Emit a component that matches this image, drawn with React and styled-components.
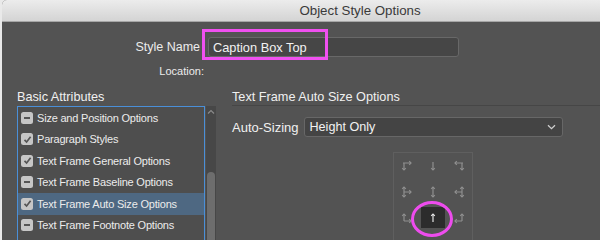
import styled, { createGlobalStyle } from "styled-components"

const GlobalStyle = createGlobalStyle`
  html, body {
    margin: 0;
    padding: 0;
    width: 600px;
    height: 240px;
    overflow: hidden;
    background: #e9e9e9;
  }
  body {
    font-family: "Liberation Sans", Arial, sans-serif;
  }
`

const Window = styled.div`
  margin-left: 2px;
  width: 598px;
  height: 240px;
  background: #535353;
  border-top-left-radius: 5px;
  overflow: hidden;
  display: flex;
  flex-direction: column;
`

const TitleBar = styled.div`
  height: 21px;
  flex: none;
  display: flex;
  align-items: center;
  justify-content: center;
  padding-left: 118px;
  background: linear-gradient(#ececec, #d4d4d4);
  border-bottom: 1px solid #a6a6a6;
  font-size: 13.3px;
  color: #3a3a3a;
`

const Form = styled.div`
  display: grid;
  grid-template-columns: 183px 251px;
  column-gap: 8px;
  align-items: center;
  padding: 15px 0 0 15px;
`

const Label = styled.div`
  text-align: right;
  color: #ececec;
  font-size: ${(p) => p.$size || 12.5}px;
  margin-right: ${(p) => p.$shift || 0}px;
  margin-top: ${(p) => p.$top || 0}px;
  line-height: 14px;
`

const InputWrap = styled.div`
  position: relative;
`

const TextInput = styled.div`
  height: 18px;
  background: #464646;
  border: 1px solid #686868;
  border-radius: 3px;
  display: flex;
  align-items: center;
  padding-left: 4px;
  font-size: 12.8px;
  color: #f2f2f2;
`

const Highlight = styled.div`
  position: absolute;
  left: -6px;
  top: -8px;
  width: 120px;
  height: 25px;
  border: 3px solid #f050f0;
`

const Main = styled.div`
  display: flex;
  padding: 11px 0 0 15px;
  flex: 1;
  min-height: 0;
`

const LeftCol = styled.div`
  width: 199px;
  flex: none;
  display: flex;
  flex-direction: column;
`

const RightCol = styled.div`
  flex: 1;
  margin-left: 16px;
  display: flex;
  flex-direction: column;
`

const Heading = styled.div`
  height: 16px;
  line-height: 16px;
  font-size: 12.7px;
  color: #f0f0f0;
  border-bottom: 1px solid ${(p) => (p.$rule ? "#464646" : "transparent")};
`

const ListArea = styled.div`
  display: flex;
  flex: 1;
  min-height: 0;
`

const List = styled.div`
  width: 187px;
  border: 1px solid #4a8fd8;
  border-bottom: none;
  background: #4e4e4e;
`

const Row = styled.div`
  height: 21.5px;
  display: flex;
  align-items: center;
  gap: 4px;
  padding-left: 3px;
  background: ${(p) => (p.$selected ? "#4e6882" : "transparent")};
  font-size: 11px;
  letter-spacing: -0.2px;
  color: #ececec;
`

const Check = styled.span`
  width: 12px;
  height: 12px;
  border-radius: 2.5px;
  background: #c6c6c6;
  display: flex;
  align-items: center;
  justify-content: center;
  flex: none;
`

const Scroll = styled.div`
  width: 10px;
  margin-left: 1px;
  background: #474747;
  position: relative;
  display: flex;
  flex-direction: column;
  align-items: center;
`

const ScrollThumb = styled.div`
  margin-top: 57px;
  width: 8px;
  flex: 1;
  background: #6d6d6d;
  border-radius: 4px 4px 0 0;
`

const SizingRow = styled.div`
  display: flex;
  align-items: center;
  gap: 6px;
  margin-top: 11px;
  font-size: 13px;
  color: #f0f0f0;
`

const Select = styled.div`
  width: 247px;
  height: 18px;
  display: flex;
  align-items: center;
  justify-content: space-between;
  padding: 0 6px 0 4px;
  background: #444444;
  border: 1px solid #676767;
  border-radius: 3px;
  font-size: 12.6px;
  color: #f2f2f2;
`

const RefWrap = styled.div`
  margin: 15px 0 0 161px;
  display: flex;
`

const RefBox = styled.div`
  width: 78px;
  height: 90px;
  border: 1px solid #5f5f5f;
  display: grid;
  grid-template-columns: repeat(3, 26px);
  grid-template-rows: repeat(3, 26px);
  align-content: start;
`

const Cell = styled.div`
  position: relative;
  display: flex;
  align-items: center;
  justify-content: center;
  &::before {
    content: "";
    position: absolute;
    left: 1px;
    top: 2px;
    width: 24px;
    height: 21px;
    background: ${(p) => (p.$selected ? "#2c2c2c" : "transparent")};
  }
  svg {
    position: relative;
  }
`

const Ring = styled.div`
  position: absolute;
  left: -9px;
  top: -4px;
  width: 36px;
  height: 30px;
  border: 3px solid #ee4cee;
  border-radius: 50%;
`

const rows = [
  { label: "Size and Position Options", mark: "minus" },
  { label: "Paragraph Styles", mark: "check" },
  { label: "Text Frame General Options", mark: "check" },
  { label: "Text Frame Baseline Options", mark: "minus" },
  { label: "Text Frame Auto Size Options", mark: "check", selected: true },
  { label: "Text Frame Footnote Options", mark: "minus" },
]

// arrows for each reference point cell: [x1, y1, x2, y2]
const arrows = [
  [[2, 3, 10, 3], [3, 3, 3, 10]],
  [[6, 2, 6, 10]],
  [[10, 3, 2, 3], [9, 3, 9, 10]],
  [[3, 6, 3, 1], [3, 6, 3, 11], [3, 6, 10, 6]],
  [[6, 6, 6, 1], [6, 6, 6, 11]],
  [[9, 6, 9, 1], [9, 6, 9, 11], [9, 6, 2, 6]],
  [[3, 9, 3, 2], [3, 9, 10, 9]],
  [[6, 10, 6, 2]],
  [[9, 9, 9, 2], [9, 9, 2, 9]],
]

const Arrows = ({ list, color }) => (
  <svg width="12" height="12" viewBox="0 0 12 12" fill="none" stroke={color} strokeWidth="1.2">
    {list.map(([x1, y1, x2, y2], i) => {
      const dx = Math.sign(x2 - x1)
      const dy = Math.sign(y2 - y1)
      const h = 1.8
      const head = dx
        ? `${x2 - dx * h},${y2 - h} ${x2},${y2} ${x2 - dx * h},${y2 + h}`
        : `${x2 - h},${y2 - dy * h} ${x2},${y2} ${x2 + h},${y2 - dy * h}`
      return (
        <g key={i}>
          <line x1={x1} y1={y1} x2={x2} y2={y2} />
          <polyline points={head} />
        </g>
      )
    })}
  </svg>
)

const Mark = ({ type }) => (
  <Check>
    {type === "check" ? (
      <svg width="9" height="9" viewBox="0 0 9 9" fill="none" stroke="#555" strokeWidth="1.7">
        <polyline points="1.5,4.8 3.6,7 7.6,1.8" />
      </svg>
    ) : (
      <svg width="8" height="8" viewBox="0 0 8 8">
        <rect x="1" y="3" width="6" height="2" fill="#555" />
      </svg>
    )}
  </Check>
)

const App = () => {
  return (
    <>
      <GlobalStyle />
      <Window>
        <TitleBar>Object Style Options</TitleBar>
        <Form>
          <Label>Style Name</Label>
          <InputWrap>
            <TextInput>Caption Box Top</TextInput>
            <Highlight />
          </InputWrap>
          <Label $size={11} $shift={-4} $top={7}>Location:</Label>
          <div />
        </Form>
        <Main>
          <LeftCol>
            <Heading>Basic Attributes</Heading>
            <ListArea>
              <List>
                {rows.map((item, index) => (
                  <Row key={index} $selected={item.selected}>
                    <Mark type={item.mark} />
                    {item.label}
                  </Row>
                ))}
              </List>
              <Scroll>
                <svg width="8" height="6" viewBox="0 0 8 6" style={{ marginTop: 3 }} fill="none" stroke="#8a8a8a" strokeWidth="1.2">
                  <polyline points="1,4.5 4,1.5 7,4.5" />
                </svg>
                <ScrollThumb />
              </Scroll>
            </ListArea>
          </LeftCol>
          <RightCol>
            <Heading $rule>Text Frame Auto Size Options</Heading>
            <SizingRow>
              Auto-Sizing
              <Select>
                Height Only
                <svg width="9" height="6" viewBox="0 0 9 6" fill="none" stroke="#cfcfcf" strokeWidth="1.3">
                  <polyline points="1,1.2 4.5,4.6 8,1.2" />
                </svg>
              </Select>
            </SizingRow>
            <RefWrap>
              <RefBox>
                {arrows.map((list, index) => (
                  <Cell key={index} $selected={index === 7}>
                    <Arrows list={list} color={index === 7 ? "#e6e6e6" : "#8f8f8f"} />
                    {index === 7 && <Ring />}
                  </Cell>
                ))}
              </RefBox>
            </RefWrap>
          </RightCol>
        </Main>
      </Window>
    </>
  )
}

export default App
